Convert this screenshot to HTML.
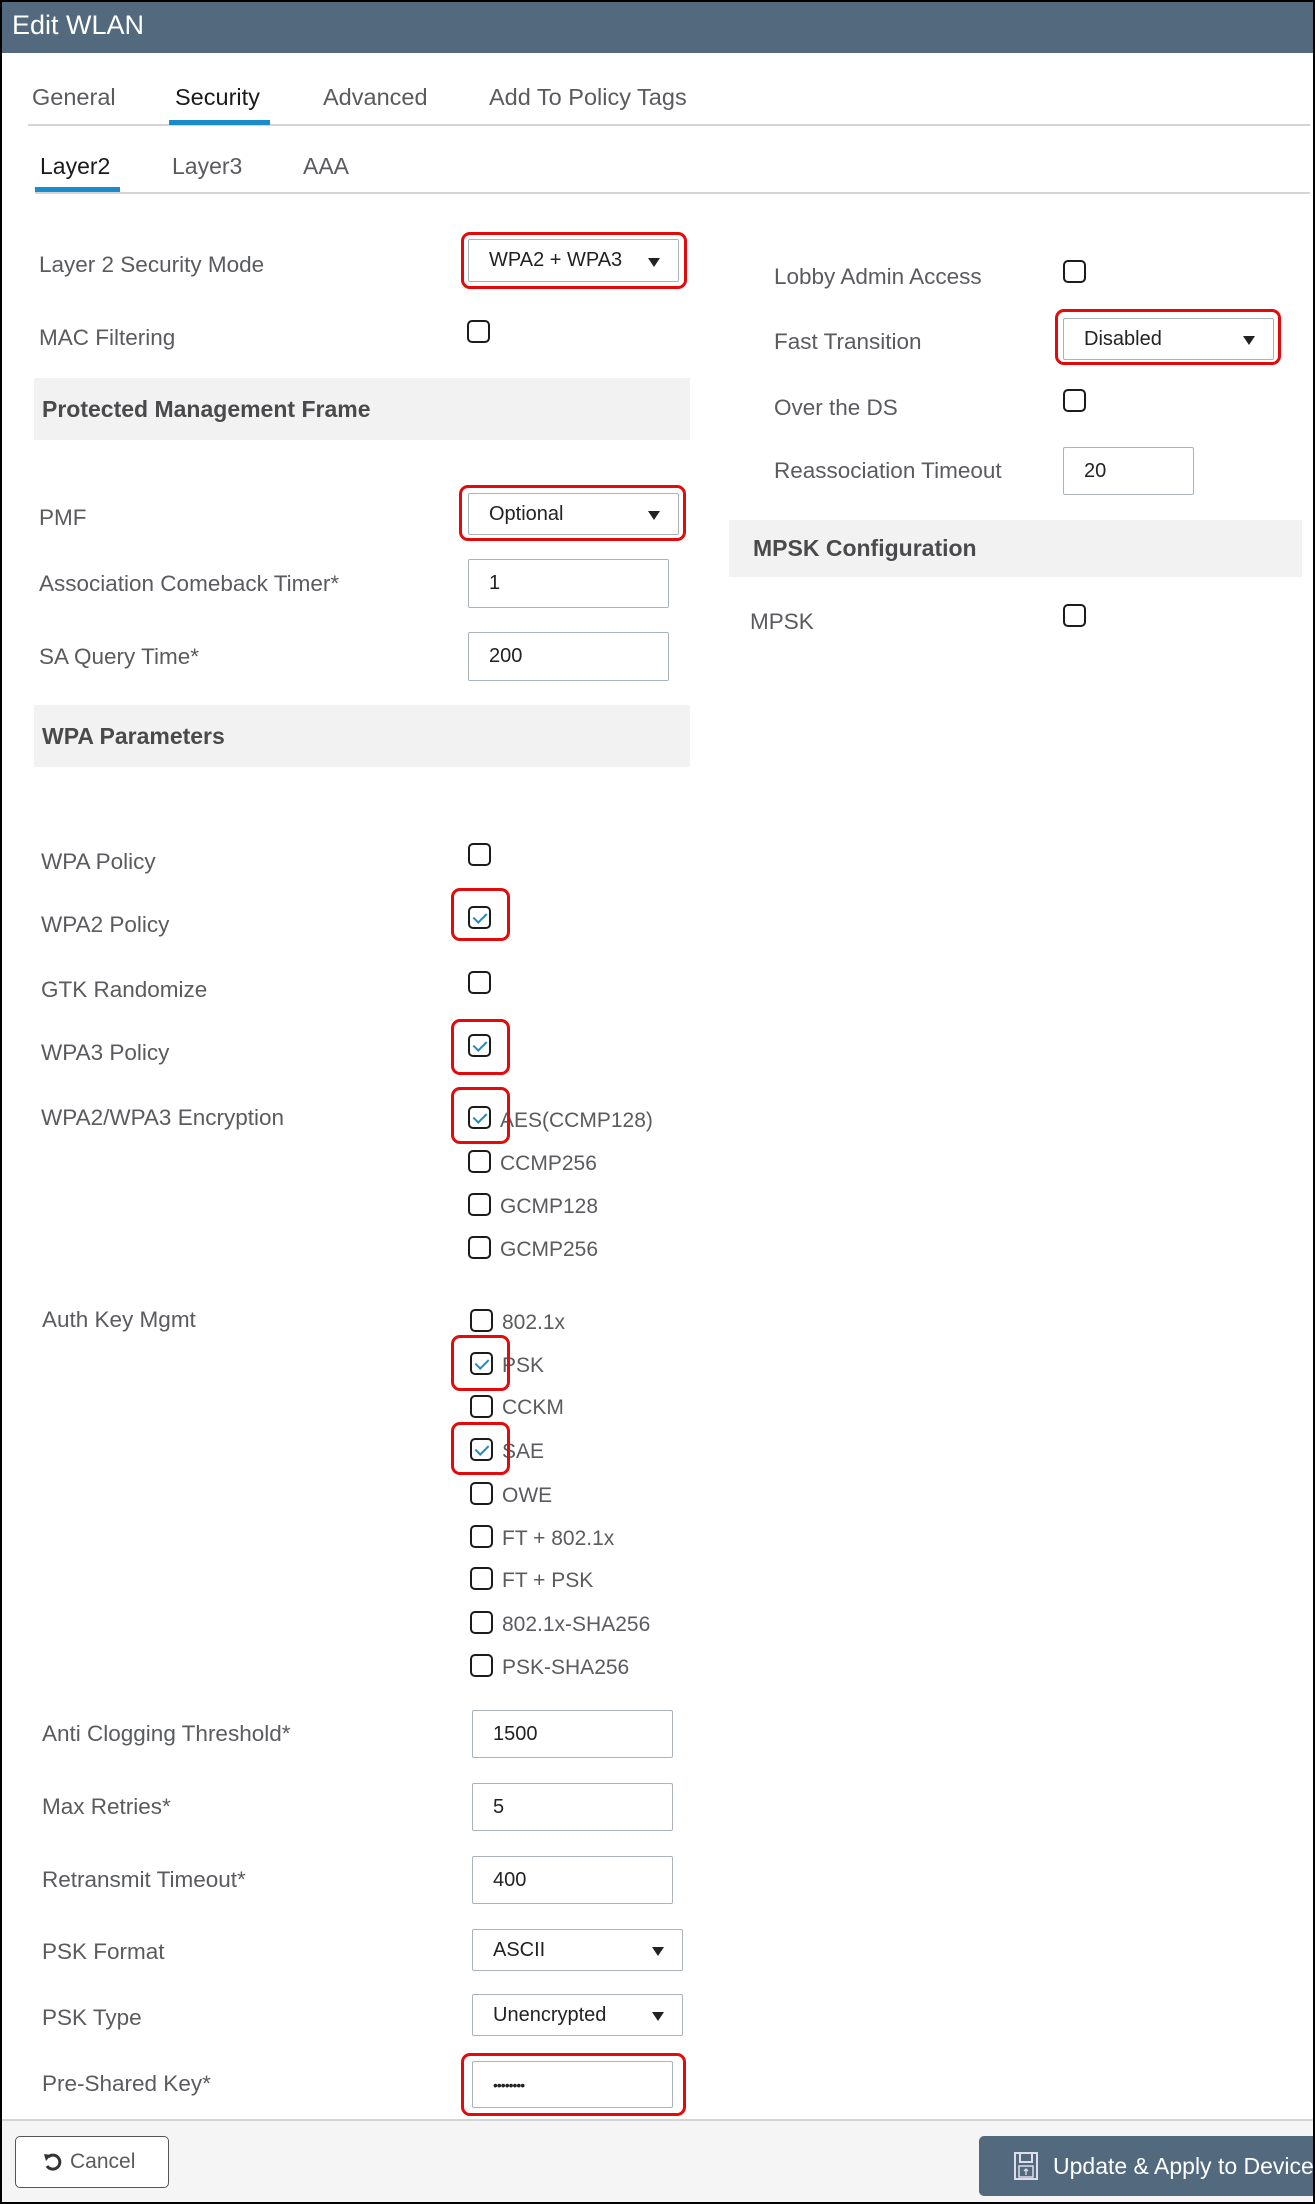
<!DOCTYPE html>
<html><head><meta charset="utf-8"><style>
*{box-sizing:border-box;margin:0;padding:0}
body{width:1315px;height:2204px;position:relative;background:#fff;font-family:"Liberation Sans",sans-serif;color:#5a5b5e;overflow:hidden}
.frame{position:absolute;left:0;top:0;width:1315px;height:2204px;border:2px solid #000;pointer-events:none;z-index:10}
.a{position:absolute;white-space:nowrap}
.l{position:absolute;font-size:22.5px;line-height:26px;transform:translateY(-11px);white-space:nowrap}
.cb{position:absolute;width:23px;height:23px;border:2.5px solid #1b1b1b;border-radius:5px;background:#fff}
.cb.c::after{content:"";position:absolute;left:6px;top:2px;width:6px;height:11px;border:solid #1e8bc3;border-width:0 2px 2px 0;transform:rotate(45deg)}
.in{position:absolute;border:1px solid #a9b3bb;border-radius:2px;background:#fff;font-size:20px;color:#222;padding-left:20px;display:flex;align-items:center}
.sel::after{content:"";position:absolute;right:18px;top:50%;margin-top:-3px;border-left:6px solid transparent;border-right:6px solid transparent;border-top:9px solid #222}
.red{position:absolute;border:3.5px solid #e20a0a;border-radius:9px}
.sec{position:absolute;background:#f2f2f2;font-weight:bold;font-size:23px;color:#4a4a4d;display:flex;align-items:center}
.opt{position:absolute;font-size:21px;line-height:26px;transform:translateY(-12px)}
</style></head><body>
<div class="frame"></div>
<div class="a" style="left:0;top:0;width:1315px;height:53px;background:#536a7e"></div>
<div class="a" style="left:12px;top:10px;font-size:27px;color:#fff">Edit WLAN</div>

<div class="l" style="left:32px;top:95px;font-size:23.5px">General</div>
<div class="l" style="left:175px;top:95px;font-size:23.5px;color:#1a1a1a">Security</div>
<div class="l" style="left:323px;top:95px;font-size:23.5px">Advanced</div>
<div class="l" style="left:489px;top:95px;font-size:23.5px">Add To Policy Tags</div>
<div class="a" style="left:28px;top:124px;width:1282px;height:2px;background:#d5d5d5"></div>
<div class="a" style="left:169px;top:120px;width:101px;height:5px;background:#1a8ccc"></div>

<div class="l" style="left:40px;top:164px;font-size:23px;color:#1a1a1a">Layer2</div>
<div class="l" style="left:172px;top:164px;font-size:23px">Layer3</div>
<div class="l" style="left:303px;top:164px;font-size:23px">AAA</div>
<div class="a" style="left:35px;top:192px;width:1275px;height:2px;background:#d5d5d5"></div>
<div class="a" style="left:35px;top:187px;width:85px;height:5px;background:#1a8ccc"></div>

<!-- left column -->
<div class="l" style="left:39px;top:263px">Layer 2 Security Mode</div>
<div class="in sel" style="left:468px;top:239px;width:211px;height:43px">WPA2 + WPA3</div>
<div class="red" style="left:461px;top:232px;width:226px;height:57px"></div>
<div class="l" style="left:39px;top:336px">MAC Filtering</div>
<div class="cb" style="left:467px;top:320px"></div>
<div class="sec" style="left:34px;top:378px;width:656px;height:62px;padding-left:8px">Protected Management Frame</div>
<div class="l" style="left:39px;top:516px">PMF</div>
<div class="in sel" style="left:468px;top:493px;width:211px;height:42px">Optional</div>
<div class="red" style="left:459px;top:485px;width:227px;height:56px"></div>
<div class="l" style="left:39px;top:582px">Association Comeback Timer*</div>
<div class="in" style="left:468px;top:559px;width:201px;height:49px">1</div>
<div class="l" style="left:39px;top:655px">SA Query Time*</div>
<div class="in" style="left:468px;top:632px;width:201px;height:49px">200</div>
<div class="sec" style="left:34px;top:705px;width:656px;height:62px;padding-left:8px">WPA Parameters</div>

<div class="l" style="left:41px;top:860px">WPA Policy</div>
<div class="cb" style="left:468px;top:843px"></div>
<div class="l" style="left:41px;top:923px">WPA2 Policy</div>
<div class="cb c" style="left:468px;top:906px"></div>
<div class="red" style="left:451px;top:888px;width:59px;height:53px"></div>
<div class="l" style="left:41px;top:988px">GTK Randomize</div>
<div class="cb" style="left:468px;top:971px"></div>
<div class="l" style="left:41px;top:1051px">WPA3 Policy</div>
<div class="cb c" style="left:468px;top:1034px"></div>
<div class="red" style="left:451px;top:1019px;width:59px;height:56px"></div>
<div class="l" style="left:41px;top:1116px">WPA2/WPA3 Encryption</div>
<div class="cb c" style="left:468px;top:1106px"></div><div class="opt" style="left:500px;top:1120px">AES(CCMP128)</div>
<div class="red" style="left:451px;top:1087px;width:59px;height:57px"></div>
<div class="cb" style="left:468px;top:1150px"></div><div class="opt" style="left:500px;top:1163px">CCMP256</div>
<div class="cb" style="left:468px;top:1193px"></div><div class="opt" style="left:500px;top:1206px">GCMP128</div>
<div class="cb" style="left:468px;top:1236px"></div><div class="opt" style="left:500px;top:1249px">GCMP256</div>

<div class="l" style="left:42px;top:1318px">Auth Key Mgmt</div>
<div class="cb" style="left:470px;top:1309px"></div><div class="opt" style="left:502px;top:1322px">802.1x</div>
<div class="cb c" style="left:470px;top:1352px"></div><div class="opt" style="left:502px;top:1365px">PSK</div>
<div class="red" style="left:451px;top:1335px;width:59px;height:56px"></div>
<div class="cb" style="left:470px;top:1395px"></div><div class="opt" style="left:502px;top:1407px">CCKM</div>
<div class="cb c" style="left:470px;top:1438px"></div><div class="opt" style="left:502px;top:1451px">SAE</div>
<div class="red" style="left:451px;top:1422px;width:59px;height:53px"></div>
<div class="cb" style="left:470px;top:1482px"></div><div class="opt" style="left:502px;top:1495px">OWE</div>
<div class="cb" style="left:470px;top:1525px"></div><div class="opt" style="left:502px;top:1538px">FT + 802.1x</div>
<div class="cb" style="left:470px;top:1567px"></div><div class="opt" style="left:502px;top:1580px">FT + PSK</div>
<div class="cb" style="left:470px;top:1611px"></div><div class="opt" style="left:502px;top:1624px">802.1x-SHA256</div>
<div class="cb" style="left:470px;top:1654px"></div><div class="opt" style="left:502px;top:1667px">PSK-SHA256</div>

<div class="l" style="left:42px;top:1732px">Anti Clogging Threshold*</div>
<div class="in" style="left:472px;top:1710px;width:201px;height:48px">1500</div>
<div class="l" style="left:42px;top:1805px">Max Retries*</div>
<div class="in" style="left:472px;top:1783px;width:201px;height:48px">5</div>
<div class="l" style="left:42px;top:1878px">Retransmit Timeout*</div>
<div class="in" style="left:472px;top:1856px;width:201px;height:48px">400</div>
<div class="l" style="left:42px;top:1950px">PSK Format</div>
<div class="in sel" style="left:472px;top:1929px;width:211px;height:42px">ASCII</div>
<div class="l" style="left:42px;top:2016px">PSK Type</div>
<div class="in sel" style="left:472px;top:1994px;width:211px;height:42px">Unencrypted</div>
<div class="l" style="left:42px;top:2082px">Pre-Shared Key*</div>
<div class="in" style="left:472px;top:2061px;width:201px;height:47px;font-size:14px;letter-spacing:-1px">••••••••</div>
<div class="red" style="left:461px;top:2053px;width:225px;height:63px"></div>

<!-- right column -->
<div class="l" style="left:774px;top:275px">Lobby Admin Access</div>
<div class="cb" style="left:1063px;top:260px"></div>
<div class="l" style="left:774px;top:340px">Fast Transition</div>
<div class="in sel" style="left:1063px;top:318px;width:211px;height:42px">Disabled</div>
<div class="red" style="left:1055px;top:309px;width:226px;height:56px"></div>
<div class="l" style="left:774px;top:406px">Over the DS</div>
<div class="cb" style="left:1063px;top:389px"></div>
<div class="l" style="left:774px;top:469px">Reassociation Timeout</div>
<div class="in" style="left:1063px;top:447px;width:131px;height:48px">20</div>
<div class="sec" style="left:729px;top:520px;width:573px;height:57px;padding-left:24px">MPSK Configuration</div>
<div class="l" style="left:750px;top:620px">MPSK</div>
<div class="cb" style="left:1063px;top:604px"></div>

<!-- footer -->
<div class="a" style="left:0;top:2119px;width:1315px;height:85px;background:#f5f5f5;border-top:2px solid #d5d5d5"></div>
<div class="a" style="left:15px;top:2136px;width:154px;height:52px;border:1.5px solid #555;border-radius:5px;background:#fff;font-size:21px;display:flex;align-items:center;padding-left:26px">
<svg width="20" height="20" viewBox="0 0 20 20" style="margin-right:8px"><path d="M6 5 A7 7 0 1 1 5 14" fill="none" stroke="#333" stroke-width="3"/><path d="M2 2 L9 3 L4 9 Z" fill="#333"/></svg>Cancel</div>
<div class="a" style="left:979px;top:2136px;width:340px;height:60px;background:#536a7e;border-radius:5px;color:#fff;font-size:23px;display:flex;align-items:center;padding-left:34px">
<svg width="26" height="30" viewBox="0 0 26 30" style="margin-right:14px"><rect x="2" y="2" width="22" height="26" fill="none" stroke="#dde" stroke-width="2"/><rect x="7" y="2" width="12" height="9" fill="none" stroke="#dde" stroke-width="2"/><rect x="6" y="15" width="14" height="11" fill="none" stroke="#dde" stroke-width="1.5"/><path d="M13 24 V18 M11 20 L13 18 L15 20" stroke="#dde" fill="none" stroke-width="1.3"/></svg>Update &amp; Apply to Device</div>
</body></html>
